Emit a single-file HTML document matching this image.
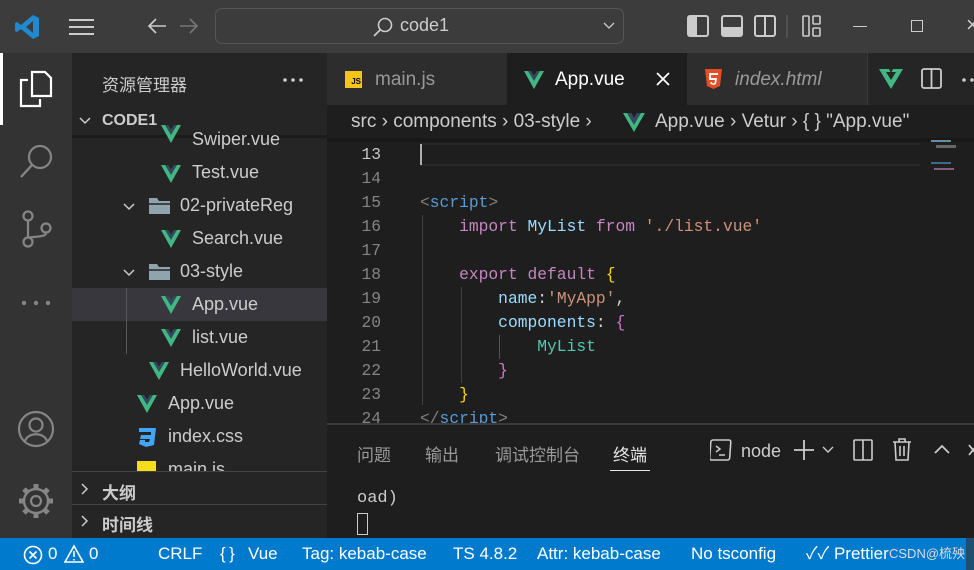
<!DOCTYPE html>
<html><head><meta charset="utf-8"><style>
*{margin:0;padding:0;box-sizing:border-box}
body{width:974px;height:570px;overflow:hidden;background:#1e1e1e;font-family:"Liberation Sans","Noto Sans CJK SC",sans-serif;color:#ccc;position:relative}
.abs{position:absolute}
#title{left:0;top:0;width:974px;height:53px;background:#3c3c3c}
#act{left:0;top:53px;width:72px;height:485px;background:#333}
#side{left:72px;top:53px;width:255px;height:485px;background:#252526}
#tabs{left:327px;top:53px;width:647px;height:52px;background:#252526}
#status{left:0;top:538px;width:974px;height:32px;background:#007acc;color:#fff;font-size:17px}
.row{position:absolute;left:72px;width:255px;height:33px}
.code{position:absolute;left:420px;font-family:"Liberation Mono",monospace;font-size:16.3px;white-space:pre;color:#d4d4d4;line-height:24px}
.ln{position:absolute;left:330px;width:51px;text-align:right;font-family:"Liberation Mono",monospace;font-size:16.3px;color:#858585;line-height:24px}
.st{position:absolute;top:0;line-height:32px}
</style></head><body>
<svg width="0" height="0" style="position:absolute"><defs>
<g id="vue"><path d="M0 0 H7 L10 5 L13 0 H20 L10 18 Z" fill="#41b883"/><path d="M4 0 H7 L10 5 L13 0 H16 L10 10 Z" fill="#34495e"/></g>
<path id="chev" d="M2 4 L7 9 L12 4" stroke="#ccc" stroke-width="1.5" fill="none"/>
<path id="chevr" d="M4 2 L9 7 L4 12" stroke="#ccc" stroke-width="1.5" fill="none"/>
</defs></svg>
<div id="title" class="abs">
 <svg class="abs" style="left:14px;top:14px" width="26" height="26" viewBox="0 0 26 26"><path d="M19 1 L25 4 V22 L19 25 L7 15 L3 18 L1 17 V9 L3 8 L7 11 Z M19 7 L12 13 L19 19 Z" fill="#1f8ad2"/></svg>
 <div class="abs" style="left:69px;top:19px;width:25px;height:2px;background:#ccc;box-shadow:0 7px 0 #ccc,0 14px 0 #ccc"></div>
 <svg class="abs" style="left:146px;top:16px" width="22" height="20"><path d="M20 10 H3 M10 3 L3 10 L10 17" stroke="#ccc" stroke-width="1.6" fill="none"/></svg>
 <svg class="abs" style="left:178px;top:16px" width="22" height="20"><path d="M2 10 H19 M12 3 L19 10 L12 17" stroke="#777" stroke-width="1.6" fill="none"/></svg>
 <div class="abs" style="left:215px;top:8px;width:409px;height:36px;border:1px solid #555;border-radius:7px;background:#3c3c3c"></div>
 <svg class="abs" style="left:372px;top:16px" width="22" height="22"><circle cx="13" cy="9" r="6.5" stroke="#ccc" stroke-width="1.6" fill="none"/><path d="M8 14 L2 20" stroke="#ccc" stroke-width="1.8"/></svg>
 <div class="abs" style="left:400px;top:15px;font-size:18px;color:#ccc">code1</div>
 <svg class="abs" style="left:602px;top:20px" width="14" height="12"><path d="M2 3 L7 8 L12 3" stroke="#ccc" stroke-width="1.3" fill="none"/></svg>
 <svg class="abs" style="left:687px;top:15px" width="150" height="24"><rect x="1" y="1" width="20" height="20" rx="2" fill="none" stroke="#ccc" stroke-width="2"/><rect x="1" y="1" width="9" height="20" fill="#ccc"/><rect x="35" y="1" width="20" height="20" rx="2" fill="none" stroke="#ccc" stroke-width="2"/><rect x="35" y="12" width="20" height="9" fill="#ccc"/><rect x="68" y="1" width="20" height="20" rx="2" fill="none" stroke="#ccc" stroke-width="2"/><path d="M78 1V21" stroke="#ccc" stroke-width="2"/><path d="M100 -1V23" stroke="#666" stroke-width="1"/><rect x="116" y="1" width="6" height="20" rx="1" fill="none" stroke="#ccc" stroke-width="1.6"/><rect x="126" y="1" width="7" height="8" rx="1" fill="none" stroke="#ccc" stroke-width="1.6"/><rect x="126" y="13" width="7" height="8" rx="1" fill="none" stroke="#ccc" stroke-width="1.6"/></svg>
 <div class="abs" style="left:853px;top:26px;width:14px;height:1px;background:#ccc"></div>
 <div class="abs" style="left:911px;top:20px;width:12px;height:12px;border:1.3px solid #ccc"></div>
 <div class="abs" style="left:966px;top:12px;font-size:22px;color:#ccc">×</div>
</div>
<div id="act" class="abs">
 <div class="abs" style="left:0;top:0;width:3px;height:72px;background:#fff"></div>
 <svg class="abs" style="left:18px;top:17px" width="36" height="38"><path d="M14 2 H27 L33 8 V26 H14 Z" fill="none" stroke="#fff" stroke-width="2.2"/><path d="M10 10 H3 V36 H22 V29" fill="none" stroke="#fff" stroke-width="2.2"/></svg>
 <svg class="abs" style="left:18px;top:90px" width="38" height="38"><circle cx="22" cy="14" r="11" stroke="#858585" stroke-width="2.2" fill="none"/><path d="M14 22 L3 34" stroke="#858585" stroke-width="2.4"/></svg>
 <svg class="abs" style="left:18px;top:155px" width="38" height="42"><circle cx="10" cy="8" r="4.5" stroke="#858585" stroke-width="2.2" fill="none"/><circle cx="10" cy="34" r="4.5" stroke="#858585" stroke-width="2.2" fill="none"/><circle cx="28" cy="20" r="4.5" stroke="#858585" stroke-width="2.2" fill="none"/><path d="M10 13 V29 M28 25 C28 30 12 28 11 30" stroke="#858585" stroke-width="2.2" fill="none"/></svg>
 <svg class="abs" style="left:20px;top:245px" width="32" height="10"><circle cx="4" cy="5" r="2.2" fill="#858585"/><circle cx="16" cy="5" r="2.2" fill="#858585"/><circle cx="28" cy="5" r="2.2" fill="#858585"/></svg>
 <svg class="abs" style="left:17px;top:357px" width="38" height="38"><circle cx="19" cy="19" r="17" stroke="#858585" stroke-width="2.2" fill="none"/><circle cx="19" cy="15" r="6.5" stroke="#858585" stroke-width="2.2" fill="none"/><path d="M8 31 C11 22 27 22 30 31" stroke="#858585" stroke-width="2.2" fill="none"/></svg>
 <svg class="abs" style="left:17px;top:429px" width="38" height="38"><circle cx="19" cy="19" r="5" stroke="#858585" stroke-width="2.2" fill="none"/><path d="M19 2 V8 M19 30 V36 M2 19 H8 M30 19 H36 M7 7 L11 11 M27 27 L31 31 M7 31 L11 27 M27 11 L31 7" stroke="#858585" stroke-width="5"/><circle cx="19" cy="19" r="12" stroke="#858585" stroke-width="2.4" fill="none"/></svg>
</div>
<div id="side" class="abs">
 <div class="abs" style="left:30px;top:18px;font-size:17px;color:#ccc">资源管理器</div>
 <svg class="abs" style="left:210px;top:24px" width="24" height="6"><circle cx="3" cy="3" r="1.8" fill="#ccc"/><circle cx="11" cy="3" r="1.8" fill="#ccc"/><circle cx="19" cy="3" r="1.8" fill="#ccc"/></svg>
 <svg class="abs" style="left:6px;top:61px" width="14" height="14"><use href="#chev"/></svg>
 <div class="abs" style="left:30px;top:59px;font-size:16px;font-weight:bold;color:#ccc">CODE1</div>
 <div class="abs" style="left:0;top:82px;width:255px;height:3px;background:#1b1b1c"></div>
</div>
<div class="row" style="top:288px;background:#37373d"></div>
<div class="abs" style="left:126px;top:288px;width:1px;height:66px;background:#585858"></div>
<div class="abs" style="left:72px;top:125px;width:255px;height:346px;overflow:hidden;font-size:18px;color:#ccc">
 <svg class="abs" style="left:89px;top:0" width="20" height="19"><use href="#vue"/></svg><div class="abs" style="left:120px;top:4px">Swiper.vue</div>
 <svg class="abs" style="left:89px;top:40px" width="20" height="19"><use href="#vue"/></svg><div class="abs" style="left:120px;top:37px">Test.vue</div>
 <svg class="abs" style="left:50px;top:75px" width="14" height="14"><use href="#chev"/></svg>
 <svg class="abs" style="left:76px;top:72px" width="24" height="18"><path d="M1 1 H9 L11 4 H22 V17 H1 Z" fill="#90a4ae"/><path d="M1 7 H22" stroke="#252526" stroke-width="1.5"/></svg><div class="abs" style="left:108px;top:70px">02-privateReg</div>
 <svg class="abs" style="left:89px;top:105px" width="20" height="19"><use href="#vue"/></svg><div class="abs" style="left:120px;top:103px">Search.vue</div>
 <svg class="abs" style="left:50px;top:141px" width="14" height="14"><use href="#chev"/></svg>
 <svg class="abs" style="left:76px;top:138px" width="24" height="18"><path d="M1 1 H9 L11 4 H22 V17 H1 Z" fill="#90a4ae"/><path d="M1 7 H22" stroke="#252526" stroke-width="1.5"/></svg><div class="abs" style="left:108px;top:136px">03-style</div>
 <svg class="abs" style="left:89px;top:171px" width="20" height="19"><use href="#vue"/></svg><div class="abs" style="left:120px;top:169px">App.vue</div>
 <svg class="abs" style="left:89px;top:204px" width="20" height="19"><use href="#vue"/></svg><div class="abs" style="left:120px;top:202px">list.vue</div>
 <svg class="abs" style="left:77px;top:237px" width="20" height="19"><use href="#vue"/></svg><div class="abs" style="left:108px;top:235px">HelloWorld.vue</div>
 <svg class="abs" style="left:65px;top:270px" width="20" height="19"><use href="#vue"/></svg><div class="abs" style="left:96px;top:268px">App.vue</div>
 <svg class="abs" style="left:65px;top:302px" width="20" height="20"><path d="M2 1 H19 L17 18 L9 20 L2 17 L3 13 H8 V15 L12 15 L13 12 H3 L4 8 H14 L14 5 H2 Z" fill="#42a5f5"/></svg><div class="abs" style="left:96px;top:301px">index.css</div>
 <div class="abs" style="left:65px;top:336px;width:19px;height:19px;background:#f5de19"></div><div class="abs" style="left:96px;top:334px">main.js</div>
</div>
<div class="abs" style="left:72px;top:471px;width:255px;height:1px;background:#444"></div>
<svg class="abs" style="left:78px;top:482px" width="14" height="14"><use href="#chevr"/></svg>
<div class="abs" style="left:102px;top:479px;font-size:17px;font-weight:bold;color:#ccc">大纲</div>
<div class="abs" style="left:72px;top:504px;width:255px;height:1px;background:#444"></div>
<svg class="abs" style="left:78px;top:514px" width="14" height="14"><use href="#chevr"/></svg>
<div class="abs" style="left:102px;top:511px;font-size:17px;font-weight:bold;color:#ccc">时间线</div>
<div id="tabs" class="abs">
 <div class="abs" style="left:0;top:0;width:180px;height:52px;background:#2d2d2d"></div>
 <div class="abs" style="left:18px;top:18px;width:17px;height:17px;background:#f5c518;font-size:8px;color:#000;font-weight:bold;text-align:right;padding-top:6px;padding-right:1px">JS</div>
 <div class="abs" style="left:48px;top:16px;font-size:19px;color:#999">main.js</div>
 <div class="abs" style="left:180px;top:0;width:180px;height:52px;background:#1e1e1e"></div>
 <svg class="abs" style="left:197px;top:18px" width="20" height="19"><use href="#vue"/></svg>
 <div class="abs" style="left:228px;top:16px;font-size:19px;color:#fff">App.vue</div>
 <svg class="abs" style="left:328px;top:18px" width="16" height="16"><path d="M2 2 L14 14 M14 2 L2 14" stroke="#fff" stroke-width="1.8"/></svg>
 <div class="abs" style="left:360px;top:0;width:180px;height:52px;background:#2d2d2d"></div>
 <svg class="abs" style="left:378px;top:16px" width="17" height="20"><path d="M0 0 H17 L15 17 L8.5 20 L2 17 Z" fill="#e44d26"/><path d="M4 4 H13 V6 H6 V9 H12 L11 15 L8.5 16 L5.5 15 V13 H7 V14 L8.5 14.5 L9.5 14 L10 11 H4 Z" fill="#fff"/></svg>
 <div class="abs" style="left:408px;top:16px;font-size:19px;color:#999;font-style:italic">index.html</div>
 <div class="abs" style="left:540px;top:0;width:1px;height:52px;background:#3c3c3c"></div>
 <svg class="abs" style="left:552px;top:16px" width="24" height="20"><path d="M0 0 H10 L12 4 L14 0 H24 L12 20 Z" fill="#41b883"/><path d="M7 3 H17 L12 11 Z" fill="#252526"/></svg>
 <svg class="abs" style="left:594px;top:15px" width="22" height="22"><rect x="1" y="1" width="19" height="19" rx="2" fill="none" stroke="#ccc" stroke-width="1.8"/><path d="M10.5 1 V20" stroke="#ccc" stroke-width="1.8"/></svg>
 <svg class="abs" style="left:634px;top:24px" width="14" height="6"><circle cx="3" cy="3" r="1.8" fill="#ccc"/><circle cx="11" cy="3" r="1.8" fill="#ccc"/></svg>
</div>
<div class="abs" style="left:327px;top:105px;width:647px;height:33px;background:#1e1e1e;font-size:19px;color:#ccc;white-space:nowrap">
 <div class="abs" style="left:24px;top:6px">src › components › 03-style ›</div>
 <svg class="abs" style="left:296px;top:8px" width="22" height="20"><path d="M0 0 H8 L11 5 L14 0 H22 L11 19 Z" fill="#41b883"/><path d="M4 0 H8 L11 5 L14 0 H18 L11 12 Z" fill="#34495e"/></svg>
 <div class="abs" style="left:328px;top:6px">App.vue › Vetur › { } "App.vue"</div>
</div>
<div class="abs" style="left:327px;top:138px;width:647px;height:4px;background:#181818"></div>
<div class="abs" style="left:420px;top:143px;width:500px;height:23px;border-top:2px solid #282828;border-bottom:2px solid #282828"></div>
<div class="abs" style="left:420px;top:144px;width:2px;height:21px;background:#aeafad"></div>
<div class="abs" style="left:422px;top:215px;width:1px;height:190px;background:#404040"></div>
<div class="abs" style="left:461px;top:287px;width:1px;height:96px;background:#404040"></div>
<div class="abs" style="left:499px;top:335px;width:1px;height:24px;background:#555"></div>
<div class="ln" style="top:143px;color:#c6c6c6">13</div>
<div class="ln" style="top:167px">14</div>
<div class="ln" style="top:191px">15</div>
<div class="ln" style="top:215px">16</div>
<div class="ln" style="top:239px">17</div>
<div class="ln" style="top:263px">18</div>
<div class="ln" style="top:287px">19</div>
<div class="ln" style="top:311px">20</div>
<div class="ln" style="top:335px">21</div>
<div class="ln" style="top:359px">22</div>
<div class="ln" style="top:383px">23</div>
<div class="ln" style="top:407px">24</div>
<div class="code" style="top:191px"><span style="color:#808080">&lt;</span><span style="color:#569cd6">script</span><span style="color:#808080">&gt;</span></div>
<div class="code" style="top:215px">    <span style="color:#c586c0">import</span> <span style="color:#9cdcfe">MyList</span> <span style="color:#c586c0">from</span> <span style="color:#ce9178">'./list.vue'</span></div>
<div class="code" style="top:263px">    <span style="color:#c586c0">export</span> <span style="color:#c586c0">default</span> <span style="color:#ffd700">{</span></div>
<div class="code" style="top:287px">        <span style="color:#9cdcfe">name</span>:<span style="color:#ce9178">'MyApp'</span>,</div>
<div class="code" style="top:311px">        <span style="color:#9cdcfe">components</span>: <span style="color:#da70d6">{</span></div>
<div class="code" style="top:335px">            <span style="color:#4ec9b0">MyList</span></div>
<div class="code" style="top:359px">        <span style="color:#da70d6">}</span></div>
<div class="code" style="top:383px">    <span style="color:#ffd700">}</span></div>
<div class="code" style="top:407px"><span style="color:#808080">&lt;/</span><span style="color:#569cd6">script</span><span style="color:#808080">&gt;</span></div>
<div class="abs" style="left:928px;top:140px;width:40px;height:40px;opacity:.6">
 <div class="abs" style="left:3px;top:0;width:20px;height:2px;background:#9cdcfe"></div>
 <div class="abs" style="left:8px;top:5px;width:20px;height:3px;background:#999"></div>
 <div class="abs" style="left:3px;top:22px;width:20px;height:2px;background:#569cd6"></div>
 <div class="abs" style="left:6px;top:28px;width:20px;height:2px;background:#c586c0"></div>
</div>
<div class="abs" style="left:327px;top:423px;width:647px;height:115px;background:#1e1e1e;border-top:2px solid #3a3a3a">
 <div class="abs" style="left:30px;top:16px;font-size:17px;color:#999">问题</div>
 <div class="abs" style="left:98px;top:16px;font-size:17px;color:#999">输出</div>
 <div class="abs" style="left:168px;top:16px;font-size:17px;color:#999">调试控制台</div>
 <div class="abs" style="left:286px;top:16px;font-size:17px;color:#e7e7e7">终端</div>
 <div class="abs" style="left:283px;top:45px;width:40px;height:1px;background:#e7e7e7"></div>
 <svg class="abs" style="left:383px;top:14px" width="22" height="22"><rect x="1" y="1" width="20" height="20" rx="2" fill="none" stroke="#ccc" stroke-width="1.6" transform="skewX(-4)"/><path d="M6 7 L10 10 L6 13 M9 16 H15" stroke="#ccc" stroke-width="1.5" fill="none"/></svg>
 <div class="abs" style="left:414px;top:16px;font-size:18px;color:#ccc">node</div>
 <svg class="abs" style="left:466px;top:14px" width="22" height="22"><path d="M11 1 V21 M1 11 H21" stroke="#ccc" stroke-width="1.8"/></svg>
 <svg class="abs" style="left:494px;top:20px" width="14" height="10"><path d="M2 2 L7 7 L12 2" stroke="#ccc" stroke-width="1.4" fill="none"/></svg>
 <svg class="abs" style="left:526px;top:14px" width="22" height="22"><rect x="1" y="1" width="18" height="20" rx="1" fill="none" stroke="#ccc" stroke-width="1.6"/><path d="M10 1 V21" stroke="#ccc" stroke-width="1.6"/></svg>
 <svg class="abs" style="left:564px;top:13px" width="22" height="24"><path d="M2 4 H20 M8 4 V1 H14 V4 M4 4 L5 22 H17 L18 4 M9 8 V18 M13 8 V18" stroke="#ccc" stroke-width="1.6" fill="none"/></svg>
 <svg class="abs" style="left:606px;top:18px" width="18" height="12"><path d="M2 10 L9 3 L16 10" stroke="#ccc" stroke-width="1.8" fill="none"/></svg>
 <svg class="abs" style="left:640px;top:18px" width="10" height="14"><path d="M2 2 L10 12 M10 2 L2 12" stroke="#ccc" stroke-width="1.8"/></svg>
 <div class="abs" style="left:30px;top:64px;font-family:'Liberation Mono',monospace;font-size:17px;color:#ccc">oad)</div>
 <div class="abs" style="left:30px;top:88px;width:11px;height:22px;border:1.5px solid #ccc"></div>
</div>
<div id="status" class="abs">
 <svg class="st" style="left:23px;top:7px" width="20" height="20"><circle cx="10" cy="10" r="8.5" stroke="#fff" stroke-width="1.6" fill="none"/><path d="M6.5 6.5 L13.5 13.5 M13.5 6.5 L6.5 13.5" stroke="#fff" stroke-width="1.6"/></svg>
 <div class="st" style="left:48px">0</div>
 <svg class="st" style="left:64px;top:6px" width="20" height="20"><path d="M10 2 L19 18 H1 Z M10 7 V13 M10 15 V16.5" stroke="#fff" stroke-width="1.6" fill="none"/></svg>
 <div class="st" style="left:89px">0</div>
 <div class="st" style="left:158px">CRLF</div>
 <div class="st" style="left:220px">{&thinsp;}</div>
 <div class="st" style="left:248px">Vue</div>
 <div class="st" style="left:302px">Tag: kebab-case</div>
 <div class="st" style="left:453px">TS 4.8.2</div>
 <div class="st" style="left:537px">Attr: kebab-case</div>
 <div class="st" style="left:691px">No tsconfig</div>
 <div class="st" style="left:806px">✓✓ Prettier</div>
 <div class="st" style="left:889px;font-size:13px;color:#ddd">CSDN@梳殃</div>
 <div class="abs" style="left:966px;top:0;width:8px;height:32px;background:#1f4f6f"></div>
</div>
</body></html>
